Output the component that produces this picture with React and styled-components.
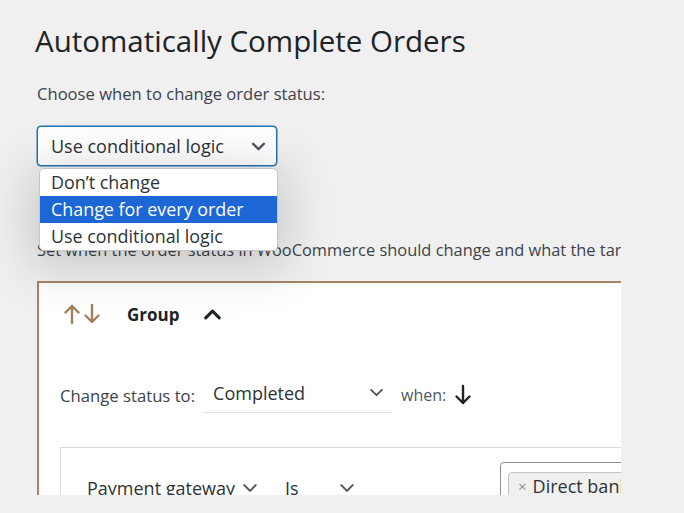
import React from "react";
import styled, { createGlobalStyle } from "styled-components";

const GlobalStyle = createGlobalStyle`
    html, body {
        margin: 0;
        background: #f0f0f1;
    }
    body {
        font-family: "Open Sans", "Noto Sans", sans-serif;
        color: #1d2327;
    }
`;

const Viewport = styled.div`
    width: 621px;
    height: 495px;
    overflow: hidden;
    background: #f0f0f1;
`;

const Page = styled.div`
    padding: 21px 0 0 37px;
    width: 800px;
`;

const Title = styled.h1`
    margin: 0 0 0 -2px;
    font-size: 29.5px;
    line-height: 40px;
    font-weight: 400;
    color: #1d2327;
`;

const Label = styled.p`
    margin: 22px 0 0;
    font-size: 16.6px;
    line-height: 22px;
    color: #3c434a;
`;

const SelectWrap = styled.div`
    position: relative;
    margin-top: 21px;
    width: 240px;
    z-index: 2;
`;

const SelectBox = styled.div`
    box-sizing: border-box;
    height: 40px;
    display: flex;
    align-items: center;
    justify-content: space-between;
    padding: 0 10px 0 13px;
    border: 1px solid #2271b1;
    border-radius: 4px;
    background: #fff;
    box-shadow: 0 0 0 0.5px #2271b1;
    font-size: 18px;
    color: #2c3338;
`;

const Menu = styled.ul`
    position: absolute;
    top: 42px;
    left: 2px;
    width: 237px;
    margin: 0;
    padding: 0;
    list-style: none;
    background: #fff;
    border: 1px solid #c3c4c7;
    border-radius: 5px;
    overflow: hidden;
    box-shadow: 0 8px 50px 10px rgba(0, 0, 0, 0.16);
`;

const MenuItem = styled.li`
    height: 27px;
    line-height: 26px;
    padding: 0 11px;
    font-size: 17.9px;
    white-space: nowrap;
    color: ${(p) => (p.$active ? "#fff" : "#2c3338")};
    background: ${(p) => (p.$active ? "#1c66d5" : "transparent")};
`;

const Description = styled.p`
    margin: 73px 0 0;
    font-size: 16.4px;
    line-height: 22px;
    color: #3c434a;
    white-space: nowrap;
`;

const Group = styled.section`
    margin-top: 20px;
    width: 700px;
    border: 2px solid #a38463;
    border-right: none;
    background: #fff;
    padding: 11px 0 40px 0;
`;

const GroupHeader = styled.div`
    display: flex;
    align-items: center;
    height: 40px;
    padding-left: 24px;
`;

const SortIcons = styled.div`
    display: flex;
    gap: 2px;
    color: #a3805c;
`;

const GroupTitle = styled.span`
    margin-left: 26px;
    font-size: 17px;
    font-weight: 700;
    color: #1d2327;
`;

const ToggleIcon = styled.span`
    display: flex;
    margin-left: 23px;
    color: #1d2327;
`;

const StatusRow = styled.div`
    display: flex;
    align-items: center;
    margin-top: 43px;
    padding-left: 21px;
    height: 36px;
`;

const RowLabel = styled.span`
    font-size: 16.7px;
    color: #3c434a;
    white-space: nowrap;
`;

const FlatSelect = styled.div`
    box-sizing: border-box;
    display: flex;
    flex-shrink: 0;
    align-items: center;
    justify-content: space-between;
    width: ${(p) => p.$width}px;
    height: 36px;
    margin-left: ${(p) => p.$gap}px;
    padding: 0 8px 4px 10px;
    border-bottom: 1px solid #e4e4e6;
    font-size: 18px;
    color: #2c3338;
`;

const WhenLabel = styled.span`
    margin-left: 9px;
    font-size: 16px;
    color: #50575e;
`;

const WhenIcon = styled.span`
    display: flex;
    margin-left: 8px;
    color: #1d2327;
`;

const Conditions = styled.div`
    margin: 34px 0 0 21px;
    border: 1px solid #dcdcde;
    border-right: none;
    padding: 14px 0 20px 26px;
    height: 80px;
`;

const ConditionRow = styled.div`
    display: flex;
    align-items: flex-start;
`;

const ConditionSelect = styled.div`
    display: flex;
    flex-shrink: 0;
    align-items: center;
    justify-content: space-between;
    width: ${(p) => p.$width}px;
    margin-right: ${(p) => p.$gap}px;
    margin-top: 12px;
    height: 28px;
    font-size: 18px;
    white-space: nowrap;
    color: #2c3338;
`;

const MultiSelect = styled.div`
    display: flex;
    flex-shrink: 0;
    align-items: flex-start;
    margin-left: ${(p) => p.$gap}px;
    width: 300px;
    height: 60px;
    border: 1px solid #8c8f94;
    border-radius: 4px;
    padding: 9px 0 0 7px;
    box-sizing: border-box;
`;

const Chip = styled.span`
    display: inline-flex;
    align-items: center;
    gap: 6px;
    height: 26px;
    padding: 0 7px 0 9px;
    border: 1px solid #c3c4c7;
    border-radius: 4px;
    background: #f0f0f1;
    font-size: 18px;
    white-space: nowrap;
    color: #2c3338;
`;

const ChipClose = styled.span`
    font-size: 15px;
    color: #8c8f94;
`;

const Chevron = ({ dir = "down", size = 14, stroke = "#50575e", width = 2 }) => (
    <svg width={size} height={size} viewBox="0 0 14 14" fill="none">
        <path
            d={dir === "down" ? "M2 4.5l5 5 5-5" : "M2 9.5l5-5 5 5"}
            stroke={stroke}
            strokeWidth={width}
            strokeLinecap="round"
            strokeLinejoin="round"
        />
    </svg>
);

const Arrow = ({ dir = "up", color = "currentColor", w = 18, h = 22 }) => (
    <svg width={w} height={h} viewBox="0 0 18 22" fill="none">
        {dir === "up" ? (
            <path
                d="M9 20V3M2.5 9.5L9 3l6.5 6.5"
                stroke={color}
                strokeWidth="2.4"
                strokeLinecap="round"
                strokeLinejoin="round"
            />
        ) : (
            <path
                d="M9 2v17M2.5 12.5L9 19l6.5-6.5"
                stroke={color}
                strokeWidth="2.4"
                strokeLinecap="round"
                strokeLinejoin="round"
            />
        )}
    </svg>
);

const OPTIONS = ["Don’t change", "Change for every order", "Use conditional logic"];

export default function App() {
    return (
        <>
            <GlobalStyle />
            <Viewport>
                <Page>
                    <Title>Automatically Complete Orders</Title>
                    <Label>Choose when to change order status:</Label>
                    <SelectWrap>
                        <SelectBox>
                            <span>Use conditional logic</span>
                            <Chevron size={15} stroke="#50575e" width={2.2} />
                        </SelectBox>
                        <Menu>
                            {OPTIONS.map((opt) => (
                                <MenuItem key={opt} $active={opt === "Change for every order"}>
                                    {opt}
                                </MenuItem>
                            ))}
                        </Menu>
                    </SelectWrap>
                    <Description>
                        Set when the order status in WooCommerce should change and what the target status should be.
                    </Description>
                    <Group>
                        <GroupHeader>
                            <SortIcons>
                                <Arrow dir="up" />
                                <Arrow dir="down" />
                            </SortIcons>
                            <GroupTitle>Group</GroupTitle>
                            <ToggleIcon>
                                <Chevron dir="up" size={19} stroke="#1d2327" width={2.3} />
                            </ToggleIcon>
                        </GroupHeader>
                        <StatusRow>
                            <RowLabel>Change status to:</RowLabel>
                            <FlatSelect $width={189} $gap={8}>
                                <span>Completed</span>
                                <Chevron size={15} stroke="#50575e" width={1.8} />
                            </FlatSelect>
                            <WhenLabel>when:</WhenLabel>
                            <WhenIcon>
                                <Arrow dir="down" color="#1d2327" />
                            </WhenIcon>
                        </StatusRow>
                        <Conditions>
                            <ConditionRow>
                                <ConditionSelect $width={171} $gap={27}>
                                    <span>Payment gateway</span>
                                    <Chevron size={16} stroke="#50575e" width={1.8} />
                                </ConditionSelect>
                                <ConditionSelect $width={70} $gap={0}>
                                    <span>Is</span>
                                    <Chevron size={16} stroke="#50575e" width={1.8} />
                                </ConditionSelect>
                                <MultiSelect $gap={145}>
                                    <Chip>
                                        <ChipClose>×</ChipClose>
                                        Direct bank transfer
                                    </Chip>
                                </MultiSelect>
                            </ConditionRow>
                        </Conditions>
                    </Group>
                </Page>
            </Viewport>
        </>
    );
}
